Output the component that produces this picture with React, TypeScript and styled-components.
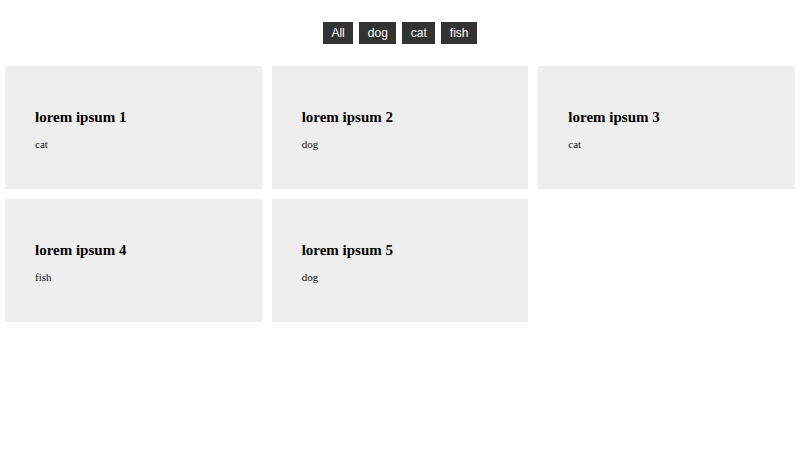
import React from "react";
import styled, { createGlobalStyle } from "styled-components";

const Global = createGlobalStyle`
  html, body { margin: 0; padding: 0; background: #fff; }
  body { font-family: "Liberation Serif", "Times New Roman", serif; }
`;

const Page = styled.div`
  padding: 22px 5px 0;
`;

const Filters = styled.div`
  display: flex;
  justify-content: center;
  gap: 6px;
  margin-bottom: 22px;
`;

const FilterButton = styled.button`
  height: 22px;
  padding: 0 8.5px;
  border: none;
  background: #333;
  color: #fff;
  font-family: "Liberation Sans", Arial, sans-serif;
  font-size: 12px;
  line-height: 22px;
  cursor: pointer;
`;

const Grid = styled.div`
  display: grid;
  grid-template-columns: repeat(3, 1fr);
  gap: 10px;
`;

const Card = styled.div`
  background: #eee;
  height: 123px;
  box-sizing: border-box;
  padding: 42px 30px 0;
`;

const Title = styled.h3`
  margin: 0 0 10px;
  font-size: 15px;
  line-height: 19px;
  font-weight: bold;
  color: #000;
`;

const Tag = styled.p`
  margin: 0;
  font-size: 11px;
  line-height: 14px;
  color: #111;
`;

const items = [
  { title: "lorem ipsum 1", tag: "cat" },
  { title: "lorem ipsum 2", tag: "dog" },
  { title: "lorem ipsum 3", tag: "cat" },
  { title: "lorem ipsum 4", tag: "fish" },
  { title: "lorem ipsum 5", tag: "dog" },
];

export default function App() {
  return (
    <>
      <Global />
      <Page>
        <Filters>
          {["All", "dog", "cat", "fish"].map((f) => (
            <FilterButton key={f}>{f}</FilterButton>
          ))}
        </Filters>
        <Grid>
          {items.map((it) => (
            <Card key={it.title}>
              <Title>{it.title}</Title>
              <Tag>{it.tag}</Tag>
            </Card>
          ))}
        </Grid>
      </Page>
    </>
  );
}
